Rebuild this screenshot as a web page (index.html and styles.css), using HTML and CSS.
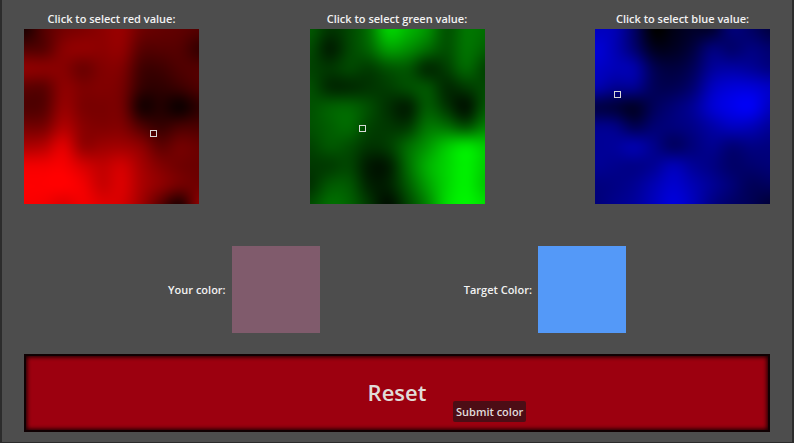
FILE: index.html
```html
<!DOCTYPE html>
<html lang="en">
<head>
<meta charset="utf-8">
<meta name="viewport" content="width=device-width, initial-scale=1">
<title>Color match</title>
<link rel="stylesheet" href="styles.css">
</head>
<body>
<main class="game">
  <section class="pickers">
    <div class="picker">
      <label class="label" for="red">Click to select red value:</label>
      <button class="field" id="red" type="button"><canvas class="noise" data-channel="red" width="175" height="175"></canvas><span class="marker marker-red"></span></button>
    </div>
    <div class="picker">
      <label class="label" for="green">Click to select green value:</label>
      <button class="field" id="green" type="button"><canvas class="noise" data-channel="green" width="175" height="175"></canvas><span class="marker marker-green"></span></button>
    </div>
    <div class="picker">
      <label class="label" for="blue">Click to select blue value:</label>
      <button class="field" id="blue" type="button"><canvas class="noise" data-channel="blue" width="175" height="175"></canvas><span class="marker marker-blue"></span></button>
    </div>
  </section>
  <section class="swatches">
    <div class="sample"><span class="label">Your color:</span><div class="swatch swatch-yours"></div></div>
    <div class="sample"><span class="label">Target Color:</span><div class="swatch swatch-target"></div></div>
  </section>
  <div class="actions">
    <button class="reset" type="button">Reset</button>
    <div class="tooltip" role="tooltip">Submit color</div>
  </div>
</main>
<script src="noise.js"></script>
</body>
</html>
```
FILE: styles.css
```css
* {
  box-sizing: border-box;
}

body {
  margin: 0;
  background: #4d4d4d;
  color: #f2f2f2;
  font-family: "Open Sans", "Noto Sans", sans-serif;
  font-size: 11px;
  font-weight: 600;
}

.game {
  min-height: 100vh;
  padding: 9px 22px;
  border: solid #2c2c2c;
  border-width: 0 2px 1px;
}

.pickers {
  display: flex;
  justify-content: space-between;
}

.picker {
  display: flex;
  flex-direction: column;
  align-items: center;
}

.label {
  line-height: 20px;
  white-space: nowrap;
}

.field {
  position: relative;
  display: block;
  padding: 0;
  border: 0;
  background: none;
  cursor: crosshair;
}

.noise {
  display: block;
}

.marker {
  position: absolute;
  width: 7px;
  height: 7px;
  border: 1px solid #d9d9d9;
}

.marker-red {
  left: 126px;
  top: 101px;
}

.marker-green {
  left: 49px;
  top: 96px;
}

.marker-blue {
  left: 19px;
  top: 62px;
}

.swatches {
  display: flex;
  justify-content: space-evenly;
  margin: 42px 0 21px;
}

.sample {
  display: flex;
  align-items: center;
  gap: 6px;
}

.swatch {
  width: 88px;
  height: 87px;
}

.swatch-yours {
  background: #805b6c;
}

.swatch-target {
  background: #5499f8;
}

.actions {
  position: relative;
}

.reset {
  display: block;
  width: 100%;
  height: 78px;
  padding: 0 0 2px;
  border: 2px solid #100002;
  background: #9c000f;
  box-shadow: inset 0 0 4px 1px #100002;
  color: #e0dcd8;
  font: 600 22px/30px "Open Sans", "Noto Sans", sans-serif;
}

.tooltip {
  position: absolute;
  left: calc(50% + 56px);
  top: 47px;
  padding: 2px 3px;
  border-radius: 2px;
  background: #4c0d15;
  color: #e0dcdc;
  line-height: 17px;
  white-space: nowrap;
}
```
FILE: noise.js
```js
// Lattice brightness for each channel, ten points a side.
const lattices = {
  red: [
    [20, 85, 115, 125, 140, 155, 110, 100, 95, 85],
    [80, 80, 140, 150, 140, 150, 85, 85, 85, 45],
    [150, 145, 135, 100, 130, 130, 60, 60, 80, 85],
    [90, 85, 145, 125, 130, 120, 50, 45, 60, 80],
    [75, 80, 155, 120, 120, 120, 10, 35, 0, 45],
    [115, 115, 180, 135, 125, 130, 80, 50, 75, 75],
    [170, 180, 235, 140, 155, 160, 145, 90, 120, 105],
    [245, 245, 250, 215, 190, 215, 165, 130, 110, 105],
    [255, 255, 260, 245, 195, 225, 170, 145, 120, 110],
    [250, 245, 220, 245, 225, 215, 160, 85, 15, 155]
  ],
  green: [
    [90, 50, 70, 110, 220, 185, 150, 75, 120, 110],
    [75, 20, 70, 100, 165, 145, 110, 75, 120, 95],
    [65, 55, 75, 55, 80, 85, 30, 60, 110, 60],
    [80, 35, 35, 50, 60, 80, 90, 35, 55, 75],
    [80, 100, 105, 80, 45, 20, 95, 50, 5, 90],
    [80, 95, 110, 65, 55, 50, 120, 110, 70, 130],
    [65, 90, 75, 50, 60, 110, 150, 205, 240, 205],
    [55, 55, 70, 20, 20, 110, 180, 215, 245, 205],
    [45, 90, 90, 30, 30, 90, 160, 215, 245, 195],
    [75, 115, 100, 55, 5, 65, 130, 225, 250, 225]
  ],
  blue: [
    [190, 185, 100, -10, 20, 40, 40, 125, 100, 60],
    [220, 180, 110, 25, 30, 60, 130, 100, 130, 110],
    [200, 185, 180, 80, 60, 85, 155, 165, 150, 125],
    [180, 145, 150, 85, 80, 110, 195, 220, 220, 200],
    [60, 50, 25, 90, 120, 150, 215, 240, 255, 190],
    [145, 140, 75, 115, 125, 135, 165, 195, 185, 150],
    [150, 155, 185, 140, 85, 120, 145, 110, 130, 125],
    [150, 140, 130, 145, 190, 150, 130, 100, 110, 120],
    [125, 130, 145, 180, 210, 180, 150, 120, 85, 95],
    [120, 140, 155, 190, 225, 190, 130, 100, 85, 50]
  ]
};

// Weight of a lattice point at distance t: a cubic kernel (B = 1/2, C = 1/4).
function weight(t) {
  const d = Math.abs(t);
  if (d < 1) return (6 * d * d * d - 10.5 * d * d + 5) / 6;
  if (d < 2) return (-2 * d * d * d + 10.5 * d * d - 18 * d + 10) / 6;
  return 0;
}

function sample(grid, gx, gy) {
  const last = grid.length - 1;
  const clamp = n => Math.max(0, Math.min(last, n));
  const i = Math.floor(gx);
  const j = Math.floor(gy);
  let sum = 0;
  for (let row = j - 1; row <= j + 2; row++) {
    for (let col = i - 1; col <= i + 2; col++) {
      sum += weight(gx - col) * weight(gy - row) * grid[clamp(row)][clamp(col)];
    }
  }
  return sum;
}

document.querySelectorAll(".noise").forEach(canvas => {
  const grid = lattices[canvas.dataset.channel];
  const channel = ["red", "green", "blue"].indexOf(canvas.dataset.channel);
  const context = canvas.getContext("2d");
  const size = canvas.width;
  const image = context.createImageData(size, size);
  for (let y = 0; y < size; y++) {
    for (let x = 0; x < size; x++) {
      const offset = (y * size + x) * 4;
      image.data[offset + channel] = sample(grid, x / size * 9, y / size * 9);
      image.data[offset + 3] = 255;
    }
  }
  context.putImageData(image, 0, 0);
});
```
